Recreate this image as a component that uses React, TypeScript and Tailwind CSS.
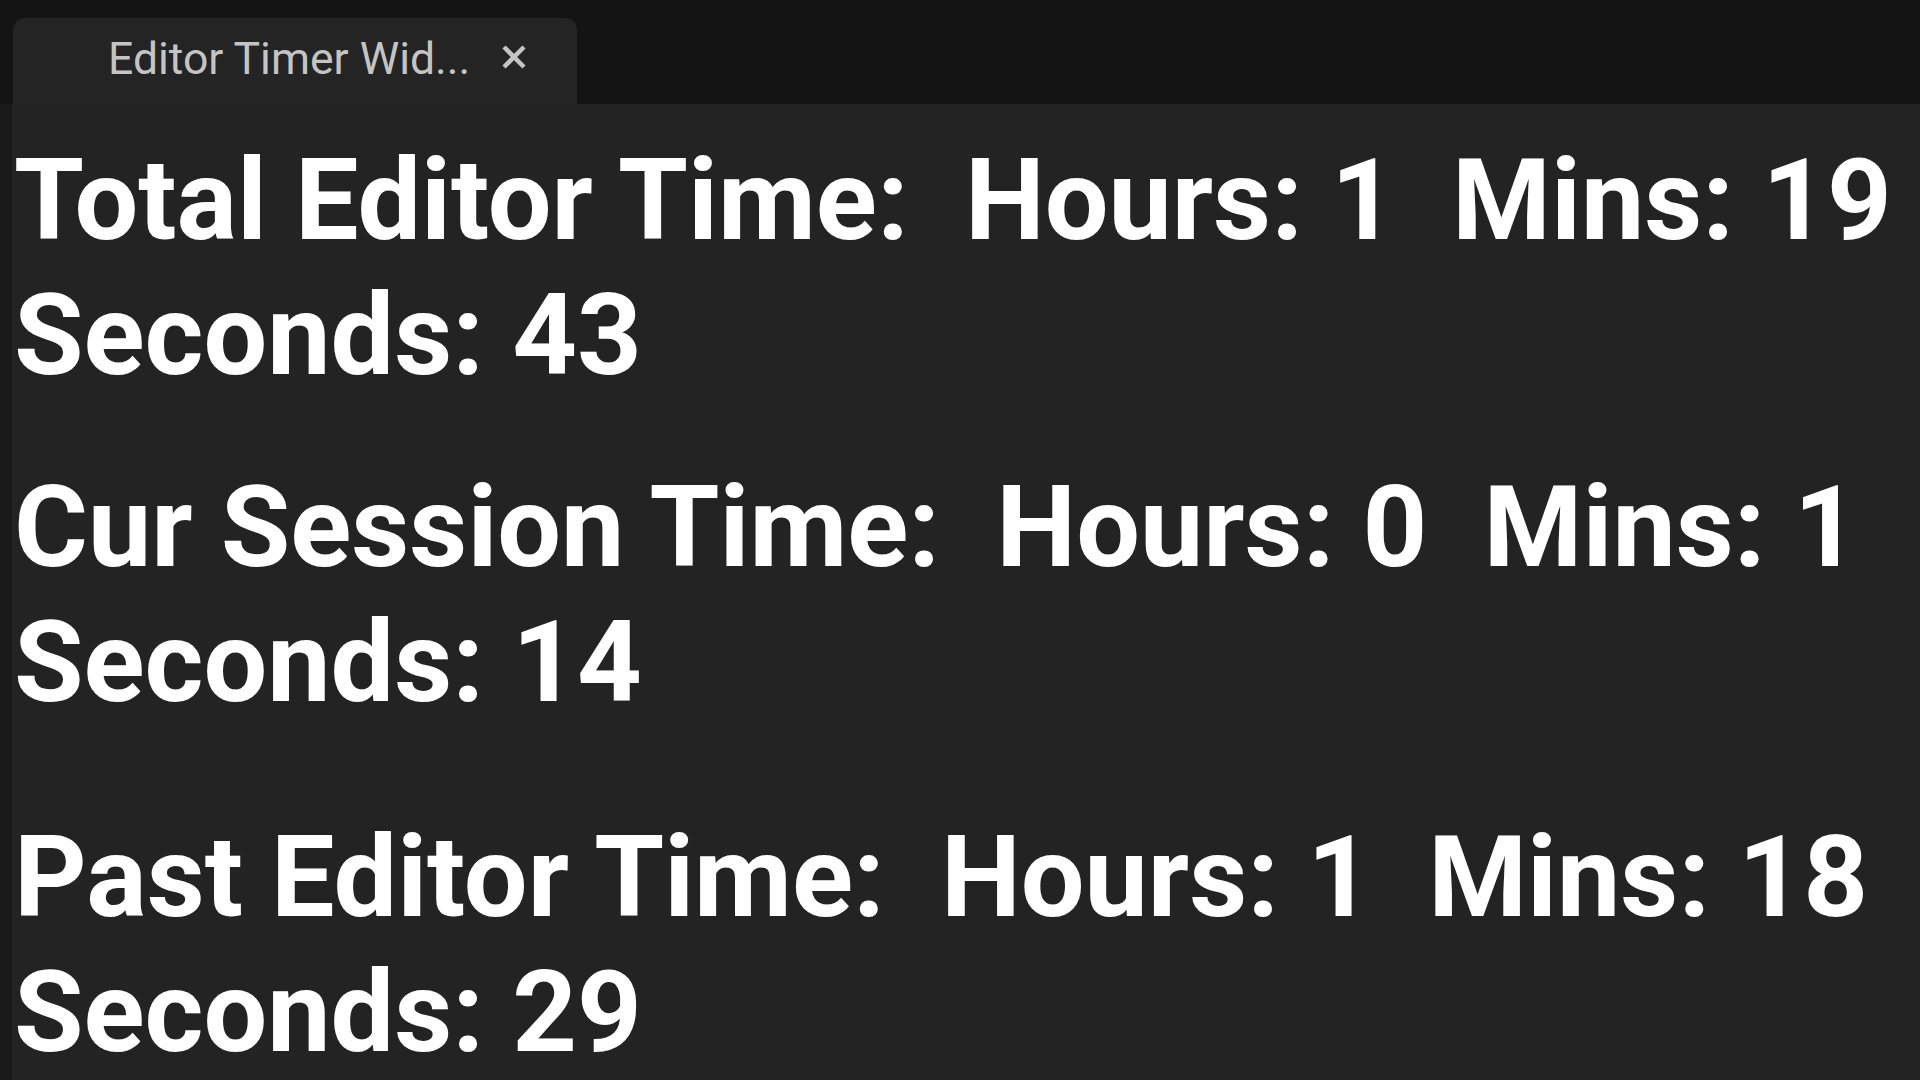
const rows = [
  { label: "Total Editor Time:", hours: 1, mins: 19, secs: 43, gap: "mt-0" },
  { label: "Cur Session Time:", hours: 0, mins: 1, secs: 14, gap: "mt-[57px]" },
  { label: "Past Editor Time:", hours: 1, mins: 18, secs: 29, gap: "mt-[80px]" },
];

function CloseIcon() {
  return (
    <svg width="26" height="26" viewBox="0 0 26 26" className="shrink-0">
      <path d="M3 3 L23 23 M23 3 L3 23" stroke="#c4c4c4" strokeWidth="4.5" strokeLinecap="butt" />
    </svg>
  );
}

export default function App() {
  return (
    <div className="flex h-[1080px] w-[1920px] flex-col overflow-hidden bg-[#141414] font-['Roboto',sans-serif]">
      {/* tab strip */}
      <div className="flex h-[104px] shrink-0 items-end pl-[13px]">
        <div className="flex h-[86px] w-[564px] items-start rounded-t-[12px] bg-[#242424] pl-[95px] pt-[14px]">
          <span className="text-[44.5px] leading-[54px] text-[#c4c4c4]">Editor Timer Wid...</span>
          <span className="ml-[31px] mt-[12px]">
            <CloseIcon />
          </span>
        </div>
      </div>

      {/* panel */}
      <div className="flex flex-1 border-l-[12px] border-[#1a1a1a] bg-[#232323]">
        <div className="flex flex-col pl-[2px] pt-[29px] text-[113px] font-bold leading-[135px] text-white">
          {rows.map((r) => (
            <div key={r.label} className={r.gap}>
              <div className="whitespace-pre">
                {`${r.label}  Hours: ${r.hours}  Mins: ${r.mins}`}
              </div>
              <div className="whitespace-pre">{`Seconds: ${r.secs}`}</div>
            </div>
          ))}
        </div>
      </div>
    </div>
  );
}
